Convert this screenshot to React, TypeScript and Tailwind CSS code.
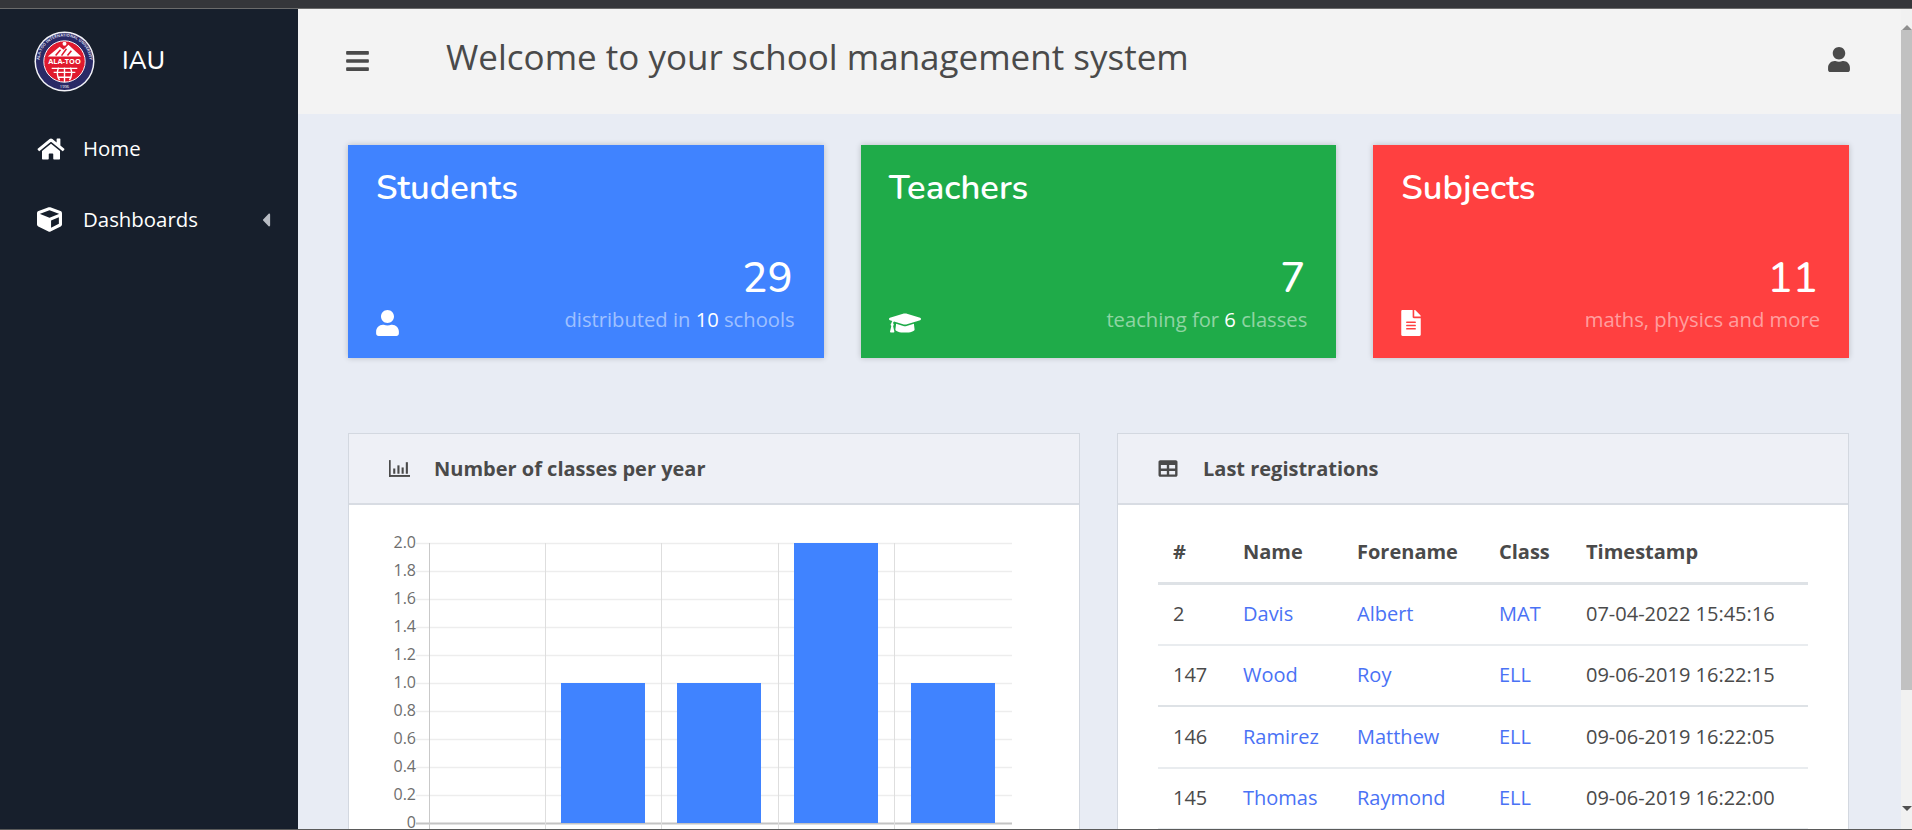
import React from 'react';
import { FaBars, FaCaretLeft, FaCube, FaFileAlt, FaGraduationCap, FaHome, FaTable, FaUser } from 'react-icons/fa';

const body = "font-['Open_Sans','Noto_Sans',sans-serif]";
const display = "font-['Nunito','Lato','Noto_Sans',sans-serif]";

const Logo = () => (
    <svg viewBox="0 0 62 62" className="w-[61px] h-[61px] shrink-0">
        <defs>
            <path id="logo-ring" d="M 5.5 31 A 25.5 25.5 0 0 1 56.5 31" />
        </defs>
        <circle cx="31" cy="31" r="30.5" fill="#f3f3f8" />
        <circle cx="31" cy="31" r="29" fill="#2a2a66" />
        <text fontSize="4" fontWeight="700" fill="#d8d8e8" fontFamily="Open Sans, sans-serif">
            <textPath href="#logo-ring" startOffset="50%" textAnchor="middle">ALA-TOO INTERNATIONAL UNIVERSITY</textPath>
        </text>
        <circle cx="31" cy="31" r="21" fill="#e01a2e" stroke="#fff" strokeWidth="1" />
        <path d="M14 26 L26 16 L30 19 L35 14 L48 26 Z" fill="#fff" />
        <path d="M22 25 L27 19 M28 25 L33 18 M34 25 L38 20" stroke="#e01a2e" strokeWidth="1.6" />
        <circle cx="31" cy="13" r="2" fill="#fff" />
        <rect x="11" y="27" width="40" height="9" fill="#e01a2e" />
        <text x="31" y="34" textAnchor="middle" fontSize="7.5" fontWeight="700" fill="#fff" fontFamily="Open Sans, sans-serif">ALA-TOO</text>
        <path d="M18 38 H44 M20 42 H42 M25 47 H37 M31 37 V52 M25 37 Q22 44 26 50 M37 37 Q40 44 36 50" stroke="#fff" strokeWidth="1.4" fill="none" />
        <text x="31" y="58" textAnchor="middle" fontSize="4.2" fill="#fff" fontFamily="Open Sans, sans-serif">1996</text>
    </svg>
);

const BarIcon = () => (
    <svg viewBox="0 0 20 16" className="w-[21px] h-[17px]" fill="#4a4a4a">
        <rect x="0" y="0" width="1.6" height="16" />
        <rect x="0" y="14.2" width="20" height="1.8" />
        <rect x="4" y="8" width="2" height="5" />
        <rect x="8" y="5" width="2" height="8" />
        <rect x="12" y="7" width="2" height="6" />
        <rect x="16" y="2" width="2" height="11" />
    </svg>
);

const cards = [
    { title: 'Students', value: '29', bg: 'bg-[#4083ff]', icon: <FaUser className="w-[23px] h-[26px]" />, pre: 'distributed in ', num: '10', post: ' schools' },
    { title: 'Teachers', value: '7', bg: 'bg-[#1fab49]', icon: <FaGraduationCap className="w-[32px] h-[26px]" />, pre: 'teaching for ', num: '6', post: ' classes' },
    { title: 'Subjects', value: '11', bg: 'bg-[#ff4040]', icon: <FaFileAlt className="w-[20px] h-[26px]" />, pre: 'maths, physics and more', num: '', post: '' },
];

const rows = [
    ['2', 'Davis', 'Albert', 'MAT', '07-04-2022 15:45:16'],
    ['147', 'Wood', 'Roy', 'ELL', '09-06-2019 16:22:15'],
    ['146', 'Ramirez', 'Matthew', 'ELL', '09-06-2019 16:22:05'],
    ['145', 'Thomas', 'Raymond', 'ELL', '09-06-2019 16:22:00'],
];

const Chart = () => {
    const ticks = ['2.0', '1.8', '1.6', '1.4', '1.2', '1.0', '0.8', '0.6', '0.4', '0.2', '0'];
    const bars = [
        { x: 212, w: 84, top: 140 },
        { x: 328, w: 84, top: 140 },
        { x: 445, w: 84, top: 0 },
        { x: 562, w: 84, top: 140 },
    ];
    return (
        <svg width="680" height="300" viewBox="0 0 680 300" className="block overflow-visible">
            {ticks.map((t, i) => (
                <g key={t}>
                    <line x1="67" x2="663" y1={i * 28 + 0.5} y2={i * 28 + 0.5} stroke={i === 10 ? '#c4c4c4' : '#ededed'} strokeWidth={i === 10 ? 2 : 1.5} />
                    <text x="67" y={i * 28 + 4.5} textAnchor="end" fontSize="16" fill="#6e6e6e" fontFamily="Open Sans, sans-serif">{t}</text>
                </g>
            ))}
            {[80, 196, 312, 429, 545].map((x, i) => (
                <line key={x} x1={x + 0.5} x2={x + 0.5} y1="0" y2="300" stroke={i === 0 ? '#c9c9c9' : '#dedede'} />
            ))}
            {bars.map((b) => (
                <rect key={b.x} x={b.x} y={b.top} width={b.w} height={280 - b.top} fill="#4083ff" />
            ))}
        </svg>
    );
};

const App: React.FC = () => {
    return (
        <div className={`${body} w-[1912px] h-[830px] overflow-hidden flex flex-col bg-[#35363a]`}>
            <div className="h-[8px] bg-[#35363a] border-b border-[#6b6b6b] box-content shrink-0" />
            <div className="flex flex-1 min-h-0">
                <aside className="w-[298px] shrink-0 bg-[#171f2c] text-white">
                    <div className="h-[104px] pl-[34px] pt-[22px]">
                        <div className="flex items-center">
                            <Logo />
                            <span className={`${display} ml-[27px] text-[25px] font-medium`}>IAU</span>
                        </div>
                    </div>
                    <nav>
                        <div className="flex items-center h-[71px] pl-[37px]">
                            <FaHome className="w-[28px] h-[24px]" />
                            <span className="ml-[18px] text-[20.4px]">Home</span>
                        </div>
                        <div className="flex items-center h-[71px] pl-[37px] pr-[26px]">
                            <FaCube className="w-[25px] h-[25px] mr-[3px]" />
                            <span className="ml-[18px] text-[20.4px] flex-1">Dashboards</span>
                            <FaCaretLeft className="w-[12px] h-[22px] text-[#b8bcc4]" />
                        </div>
                    </nav>
                </aside>
                <main className="flex-1 min-w-0 bg-[#e8ecf4] overflow-hidden">
                    <header className="h-[105px] bg-[#f3f3f3] flex items-center pl-[48px] pr-[51px] text-[#4a4a4a] pb-[3px]">
                        <FaBars className="w-[23px] h-[26px] mt-[2px]" />
                        <h1 className="ml-[77px] text-[35px] flex-1 pb-[5px]">Welcome to your school management system</h1>
                        <FaUser className="w-[22px] h-[25px] mb-[2px]" />
                    </header>
                    <div className="pl-[50px] pr-[52px] pt-[31px]">
                        <div className="grid grid-cols-3 gap-[37px]">
                            {cards.map((c) => (
                                <div key={c.title} className={`${c.bg} h-[213px] text-white shadow-[0_0_6px_rgba(0,0,0,0.2)] flex flex-col justify-between pl-[28px] pr-[29px] pt-[21px] pb-[26px]`}>
                                    <div className={`${display} text-[34.6px] leading-[44px] font-semibold`}>{c.title}</div>
                                    <div className="flex items-end justify-between">
                                        <div className="mb-[-4px]">{c.icon}</div>
                                        <div className="text-right">
                                            <div className={`${display} text-[42px] leading-[60px] font-medium pr-[2px]`}>{c.value}</div>
                                            <div className="text-[20.2px] leading-[26px] mt-[-3px] text-white/50">
                                                {c.pre}<span className="text-white">{c.num}</span>{c.post}
                                            </div>
                                        </div>
                                    </div>
                                </div>
                            ))}
                        </div>
                        <div className="grid grid-cols-2 gap-[37px] mt-[75px]">
                            <section className="bg-white border border-[#d3d8e0] h-[500px]">
                                <div className="h-[71px] bg-[#eef0f6] border-b-2 border-[#d8dce3] flex items-center pl-[40px] text-[#4a4a4a]">
                                    <BarIcon />
                                    <h2 className="ml-[24px] text-[20px] font-bold">Number of classes per year</h2>
                                </div>
                                <div className="pt-[38px]">
                                    <Chart />
                                </div>
                            </section>
                            <section className="bg-white border border-[#d3d8e0] h-[500px]">
                                <div className="h-[71px] bg-[#eef0f6] border-b-2 border-[#d8dce3] flex items-center pl-[39px] text-[#4a4a4a]">
                                    <FaTable className="w-[22px] h-[19px]" />
                                    <h2 className="ml-[24px] text-[20px] font-bold">Last registrations</h2>
                                </div>
                                <div className="px-[40px] pt-[17px]">
                                    <table className="w-[650px] text-[20px] text-[#4a4a4a] table-fixed">
                                        <thead>
                                            <tr className="h-[61px] border-b-[3px] border-[#dee2e6] text-left font-bold">
                                                <th className="pl-[15px] w-[85px]">#</th>
                                                <th className="w-[114px]">Name</th>
                                                <th className="w-[142px]">Forename</th>
                                                <th className="w-[87px]">Class</th>
                                                <th>Timestamp</th>
                                            </tr>
                                        </thead>
                                        <tbody>
                                            {rows.map((r, i) => (
                                                <tr key={r[0]} className={`h-[61.5px] border-b-2 ${i === 1 ? 'border-[#dee2e6]' : 'border-[#e9ecef]'}`}>
                                                    <td className="pl-[15px]">{r[0]}</td>
                                                    <td className="text-[#4a72f5]">{r[1]}</td>
                                                    <td className="text-[#4a72f5]">{r[2]}</td>
                                                    <td className="text-[#4a72f5]">{r[3]}</td>
                                                    <td>{r[4]}</td>
                                                </tr>
                                            ))}
                                        </tbody>
                                    </table>
                                </div>
                            </section>
                        </div>
                    </div>
                </main>
                <div className="w-[11px] shrink-0 bg-[#f1f1f1] flex flex-col items-center">
                    <div className="h-[21px] flex items-end justify-center">
                        <div className="w-0 h-0 border-x-[5px] border-x-transparent border-b-[5px] border-b-[#8f8f8f]" />
                    </div>
                    <div className="w-full h-[660px] bg-[#c1c1c1] mt-[-5px] translate-y-[5px]" />
                    <div className="mt-[121px] w-0 h-0 border-x-[5px] border-x-transparent border-t-[5px] border-t-[#505050]" />
                </div>
            </div>
            <div className="h-[1px] bg-[#5a5a5a] shrink-0" />
        </div>
    );
};

export default App;
